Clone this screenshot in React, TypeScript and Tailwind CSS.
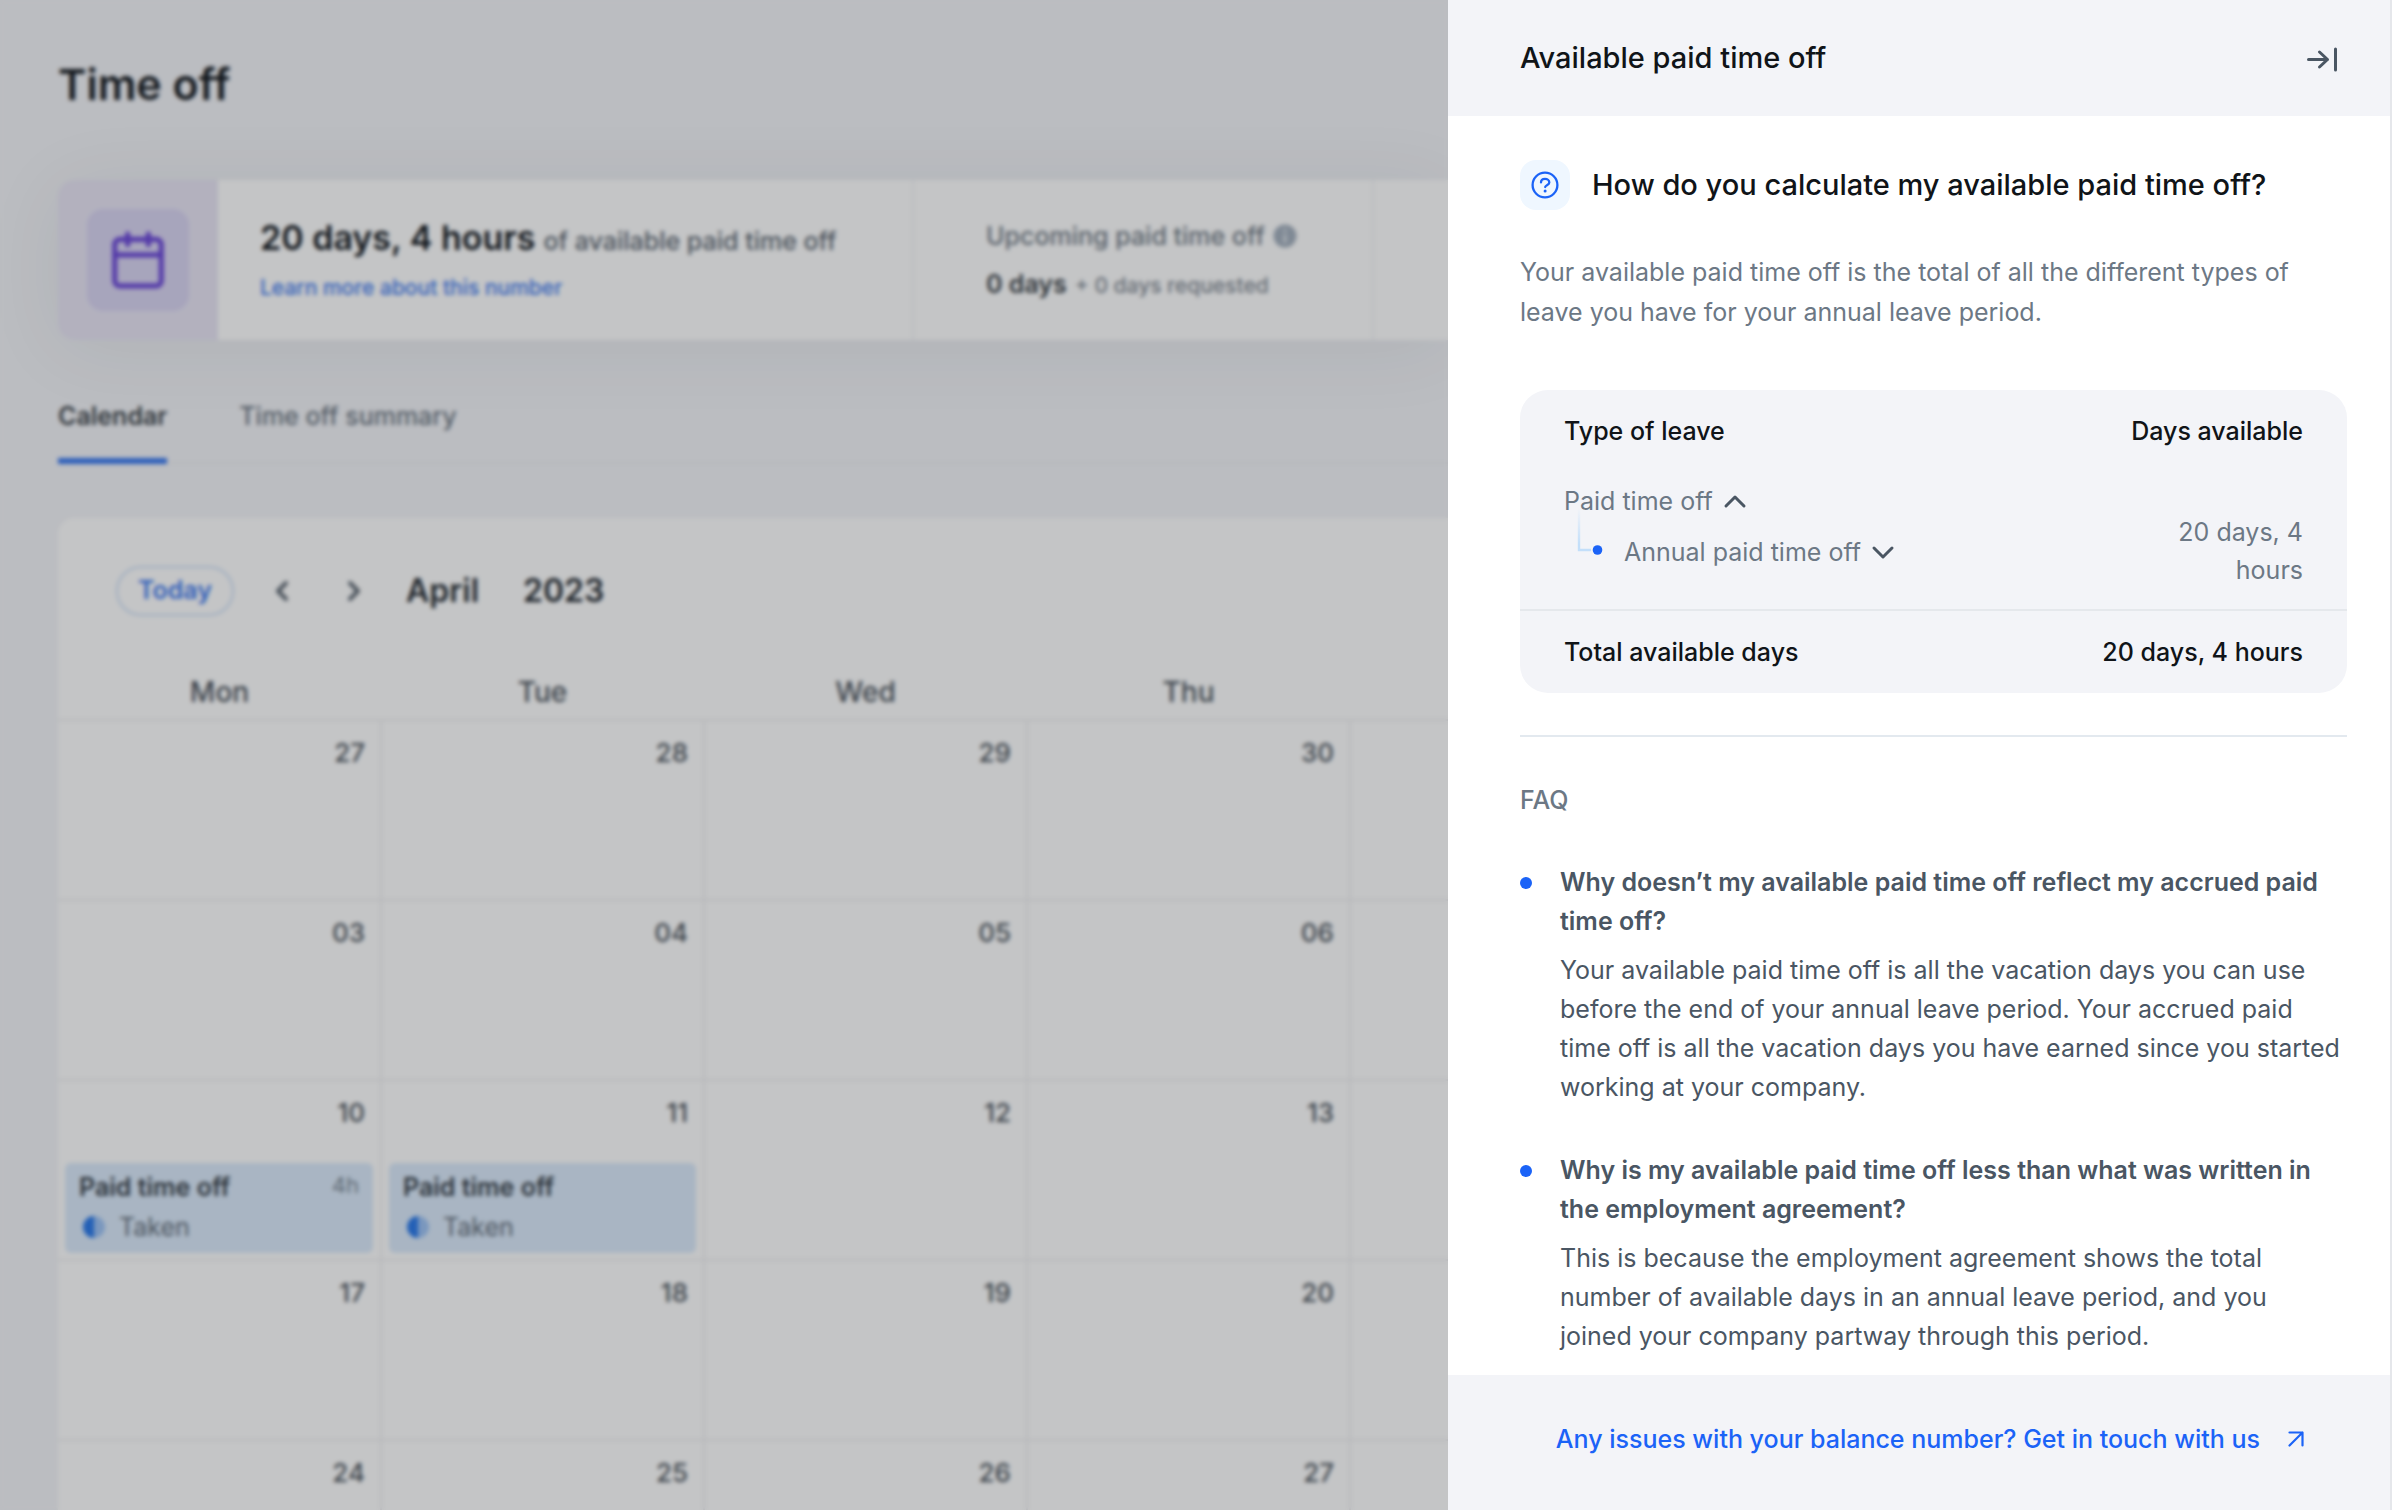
import { useState } from "react";
import { Calendar, ChevronLeft, ChevronRight } from "lucide-react";

type LeaveEvent = { title: string; status: string; duration?: string };
type Day = { label: string; event?: LeaveEvent };

const weekdays = ["Mon", "Tue", "Wed", "Thu"];

const weeks: Day[][] = [
  [{ label: "27" }, { label: "28" }, { label: "29" }, { label: "30" }],
  [{ label: "03" }, { label: "04" }, { label: "05" }, { label: "06" }],
  [
    { label: "10", event: { title: "Paid time off", status: "Taken", duration: "4h" } },
    { label: "11", event: { title: "Paid time off", status: "Taken" } },
    { label: "12" },
    { label: "13" },
  ],
  [{ label: "17" }, { label: "18" }, { label: "19" }, { label: "20" }],
  [{ label: "24" }, { label: "25" }, { label: "26" }, { label: "27" }],
];

const faqs = [
  {
    question: "Why doesn’t my available paid time off reflect my accrued paid time off?",
    answer:
      "Your available paid time off is all the vacation days you can use before the end of your annual leave period. Your accrued paid time off is all the vacation days you have earned since you started working at your company.",
  },
  {
    question: "Why is my available paid time off less than what was written in the employment agreement?",
    answer:
      "This is because the employment agreement shows the total number of available days in an annual leave period, and you joined your company partway through this period.",
  },
];

const HelpIcon = () => (
  <svg className="size-8" viewBox="0 0 32 32" fill="none" stroke="currentColor" strokeWidth="2.3" strokeLinecap="round">
    <circle cx="16" cy="16" r="12.4" />
    <path d="M12 13.4C12 11.2 13.7 9.8 16 9.8S20.3 11.3 20.3 13.4C20.3 16 16.2 16.2 16.2 18" />
    <circle cx="16.1" cy="22" r="1.5" fill="currentColor" stroke="none" />
  </svg>
);

const InfoIcon = () => (
  <svg className="size-6" viewBox="0 0 24 24">
    <circle cx="12" cy="12" r="11.5" fill="#a3afbd" />
    <path d="M12 5V8M12 10.5V19" stroke="#dde2e8" strokeWidth="3" />
  </svg>
);

const Chevron = ({ up = false }: { up?: boolean }) => (
  <svg
    className="size-7"
    viewBox="0 0 28 28"
    fill="none"
    stroke="#4a5663"
    strokeWidth="3"
    strokeLinecap="round"
    strokeLinejoin="round"
  >
    <path d={up ? "M5 19L14 10L23 19" : "M5 10L14 19L23 10"} />
  </svg>
);

const BalanceSummary = () => (
  <section className="mt-[70px] flex h-40 overflow-hidden rounded-l-2xl bg-white shadow-[0_8px_80px_rgba(30,40,60,0.07)]">
    <div className="flex w-40 shrink-0 items-center justify-center bg-[#e8e5f5]">
      <div className="flex size-[102px] items-center justify-center rounded-2xl bg-[#d9d4f2]">
        <Calendar className="size-[62px] text-[#6a46d8]" strokeWidth={2} />
      </div>
    </div>
    <div className="flex w-[696px] shrink-0 flex-col justify-center border-r-2 border-[#f2f3f5] pt-[2px] pl-[42px]">
      <p className="flex items-baseline gap-2 text-[#5b6570]">
        <strong className="text-[34px] leading-10 font-semibold text-[#14191f]">20 days, 4 hours</strong>
        <span className="text-[25px] font-medium">of available paid time off</span>
      </p>
      <a href="#balance" className="mt-3 text-[21px] leading-8 font-medium text-[#3d78ee]">
        Learn more about this number
      </a>
    </div>
    <div className="flex w-[460px] shrink-0 flex-col justify-center border-r-2 border-[#f2f3f5] pl-[72px]">
      <p className="flex items-center gap-2 text-[25px] leading-10 font-medium text-[#6f7984]">
        Upcoming paid time off
        <InfoIcon />
      </p>
      <p className="mt-[10px] flex items-baseline gap-2 text-[21px] font-medium text-[#808892]">
        <strong className="text-[25px] font-semibold text-[#3b4248]">0 days</strong>+ 0 days requested
      </p>
    </div>
  </section>
);

const EventCard = ({ event }: { event: LeaveEvent }) => (
  <div className="mt-8 h-[90px] rounded-md bg-[#dbeafb] px-[14px] py-[6px]">
    <div className="flex items-start justify-between">
      <span className="text-[25px] leading-9 font-semibold text-[#343c45]">{event.title}</span>
      {event.duration && <span className="text-[22px] leading-8 text-[#75818e]">{event.duration}</span>}
    </div>
    <div className="mt-1 flex items-center gap-[14px] pl-1 text-[25px] leading-9 text-[#5d6874]">
      <span className="flex size-[22px] overflow-hidden rounded-full bg-[#9cc2f5]">
        <span className="w-1/2 bg-[#2a79ea]" />
      </span>
      {event.status}
    </div>
  </div>
);

const TimeOffPage = () => (
  <main className="h-full overflow-hidden bg-[#f3f4f8] pt-[58px] pl-[58px]">
    <h1 className="text-[43px] leading-[52px] font-semibold text-[#14191f]">Time off</h1>
    <BalanceSummary />
    <nav className="mt-14 flex items-start gap-[72px] border-b-2 border-[#eeeff2] text-[25px] leading-10 font-medium">
      <button type="button" className="-mb-[2px] border-b-[6px] border-[#3576f0] pb-[22px] font-semibold text-[#3b4248]">
        Calendar
      </button>
      <button type="button" className="text-[#6a7480]">
        Time off summary
      </button>
    </nav>
    <section className="mt-[54px] rounded-tl-2xl bg-white">
      <div className="flex h-[146px] items-center pl-[58px] text-[32px] font-semibold text-[#262c33]">
        <button type="button" className="h-[50px] rounded-full border-2 border-[#cfe0f8] px-5 text-[25px] text-[#3d78ee]">
          Today
        </button>
        <button type="button" aria-label="Previous month" className="ml-8 text-[#5b6570]">
          <ChevronLeft className="size-8" strokeWidth={3} />
        </button>
        <button type="button" aria-label="Next month" className="ml-10 text-[#5b6570]">
          <ChevronRight className="size-8" strokeWidth={3} />
        </button>
        <span className="ml-9">April</span>
        <span className="ml-11">2023</span>
      </div>
      <table className="w-full table-fixed border-collapse">
        <colgroup>
          {weekdays.map((day) => (
            <col key={day} className="w-[323px]" />
          ))}
          <col />
        </colgroup>
        <thead>
          <tr>
            {weekdays.map((day) => (
              <th key={day} className="h-14 text-[28px] leading-10 font-medium text-[#4a525b]">
                {day}
              </th>
            ))}
            <td />
          </tr>
        </thead>
        <tbody>
          {weeks.map((week, index) => (
            <tr key={index}>
              {week.map((day) => (
                <td
                  key={day.label}
                  className="h-[180px] border-2 border-l-0 border-[#efeff1] px-[7px] pt-2 pb-[6px] align-top"
                >
                  <p className="pt-[6px] pr-2 text-right text-[26px] leading-9 font-medium text-[#4a525b]">
                    {day.label}
                  </p>
                  {day.event && <EventCard event={day.event} />}
                </td>
              ))}
              <td className="border-y-2 border-[#efeff1]" />
            </tr>
          ))}
        </tbody>
      </table>
    </section>
  </main>
);

const LeaveBreakdown = () => {
  const [open, setOpen] = useState(true);

  return (
    <table className="mt-[58px] w-full border-separate border-spacing-0 rounded-[28px] bg-[#f3f4f8] text-[25px] leading-[38px]">
      <thead className="text-[#101418]">
        <tr>
          <th className="px-11 pt-[22px] pb-8 text-left font-medium">Type of leave</th>
          <th className="px-11 pt-[22px] pb-8 text-right font-medium">Days available</th>
        </tr>
      </thead>
      <tbody className="text-[#6c7885]">
        <tr>
          <td className="pb-[38px] pl-11 align-top">
            <button type="button" className="flex items-center gap-2" onClick={() => setOpen(!open)}>
              Paid time off
              <Chevron up={open} />
            </button>
            {open && (
              <div className="flex">
                <svg className="h-[51px] w-[60px] overflow-visible" viewBox="0 0 60 51" fill="none">
                  <defs>
                    <linearGradient id="branch" x1="0" y1="-12" x2="0" y2="24" gradientUnits="userSpaceOnUse">
                      <stop stopColor="#c3dffa" stopOpacity="0" />
                      <stop offset="1" stopColor="#c3dffa" />
                    </linearGradient>
                  </defs>
                  <path d="M15 -12V30H27" stroke="url(#branch)" strokeWidth="2.4" />
                  <circle cx="33.5" cy="30" r="4.8" fill="#1b63f7" />
                </svg>
                <button type="button" className="flex items-center gap-2 pt-[13px]">
                  Annual paid time off
                  <Chevron />
                </button>
              </div>
            )}
          </td>
          <td className="pr-11 pb-5 text-right align-bottom">
            <span className="inline-block w-[130px]">20 days, 4 hours</span>
          </td>
        </tr>
      </tbody>
      <tfoot className="text-[#101418]">
        <tr>
          <th className="border-t-2 border-[#e5e8ec] px-11 py-[22px] text-left font-medium">Total available days</th>
          <td className="border-t-2 border-[#e5e8ec] px-11 py-[22px] text-right font-medium">20 days, 4 hours</td>
        </tr>
      </tfoot>
    </table>
  );
};

const BalanceDrawer = () => (
  <aside className="flex w-[944px] shrink-0 flex-col border-r-2 border-[#e5e7eb] bg-white">
    <header className="flex h-[116px] shrink-0 items-center justify-between bg-[#f3f4f8] pr-12 pl-[72px]">
      <h2 className="text-[29px] leading-10 font-medium text-[#101418]">Available paid time off</h2>
      <button type="button" aria-label="Close panel">
        <svg
          className="size-10"
          viewBox="0 0 40 40"
          fill="none"
          stroke="#4a5663"
          strokeWidth="3"
          strokeLinecap="round"
          strokeLinejoin="round"
        >
          <path d="M6.5 21.5H25.5M17.5 14L25.5 21.5L17.5 29M33.5 11V32" />
        </svg>
      </button>
    </header>
    <div className="min-h-0 flex-1 overflow-hidden pt-11 pr-[43px] pl-[72px]">
      <div className="flex items-center gap-[22px]">
        <span className="flex size-[50px] items-center justify-center rounded-2xl bg-[#eff7ff] text-[#1b63f7]">
          <HelpIcon />
        </span>
        <h3 className="text-[29px] leading-10 font-medium text-[#101418]">
          How do you calculate my available paid time off?
        </h3>
      </div>
      <p className="mt-[42px] text-[25px] leading-10 text-[#6c7885]">
        Your available paid time off is the total of all the different types of leave you have for your annual leave
        period.
      </p>
      <LeaveBreakdown />
      <hr className="mt-[42px] border-t-2 border-[#e3e9ef]" />
      <h3 className="mt-11 text-[25px] leading-[38px] font-medium text-[#6c7885]">FAQ</h3>
      <ul className="mt-11 flex flex-col gap-11">
        {faqs.map((faq) => (
          <li key={faq.question} className="flex gap-7 pr-1 text-[25px] leading-[39px] text-[#4a5663]">
            <span className="mt-[14px] size-3 shrink-0 rounded-full bg-[#1b63f7]" />
            <div>
              <h4 className="font-semibold">{faq.question}</h4>
              <p className="mt-[10px]">{faq.answer}</p>
            </div>
          </li>
        ))}
      </ul>
    </div>
    <footer className="flex h-[135px] shrink-0 items-center justify-end bg-[#f3f4f8] pr-[86px] pb-2">
      <a href="#support" className="flex items-center gap-7 text-[25px] leading-10 font-medium text-[#1b63f7]">
        Any issues with your balance number? Get in touch with us
        <svg
          className="size-4"
          viewBox="0 0 16 16"
          fill="none"
          stroke="currentColor"
          strokeWidth="2.2"
          strokeLinecap="round"
          strokeLinejoin="round"
        >
          <path d="M1.5 14.5L14.5 1.5M1.5 1.5H14.5V14.5" />
        </svg>
      </a>
    </footer>
  </aside>
);

export default function App() {
  return (
    <div className="flex h-screen overflow-hidden font-['Inter',sans-serif]">
      <div className="relative min-w-0 flex-1 overflow-hidden">
        <TimeOffPage />
        <div className="absolute inset-0 bg-[rgba(20,22,26,0.25)] backdrop-blur-[2px]" />
      </div>
      <BalanceDrawer />
    </div>
  );
}
